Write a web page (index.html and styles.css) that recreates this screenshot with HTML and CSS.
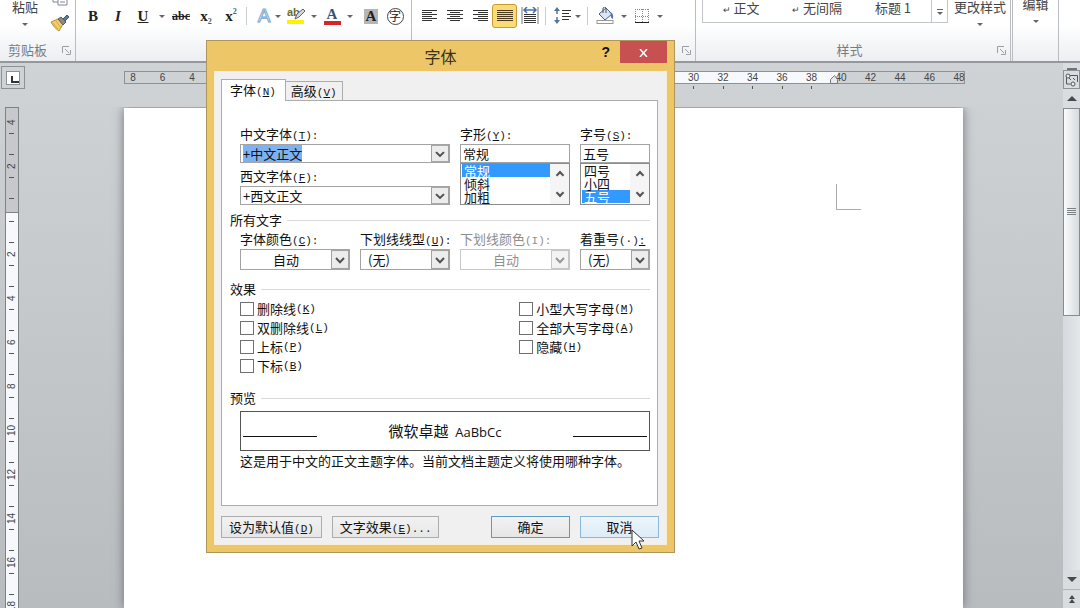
FILE: index.html
```html
<!DOCTYPE html>
<html lang="zh-CN">
<head>
    <meta charset="UTF-8">
    <title>字体</title>
    <link rel="stylesheet" href="styles.css">
</head>
<body>
    <!-- ribbon -->
    <header class="ribbon">
        <section class="group clipboard">
            <div class="group-main">
                <button class="big-button">粘贴<i class="caret"></i></button>
                <div class="clip-icons">
                    <button class="tool" aria-label="复制">
                        <svg width="18" height="6" viewBox="0 0 18 6"><path d="M2 0v2h5M7 0v5h9V0M9 2h5" fill="#fff" stroke="#7d8794"/></svg>
                    </button>
                    <button class="tool" aria-label="格式刷">
                        <svg width="20" height="18" viewBox="0 0 20 18"><path d="M1 8l7-3 5 5-4 7c-3-2-6-5-8-9z" fill="#f3cf6b" stroke="#b98d35"/><path d="M3 9l5 6M6 7l5 7" stroke="#d8a743"/><path d="M8 5l3-2 5 5-3 3z" fill="#8f8a86" stroke="#5f5b5a"/><path d="M13 5l4-4 2 2-4 4z" fill="#5b79a5" stroke="#41597c"/></svg>
                    </button>
                </div>
            </div>
            <div class="group-label">剪贴板<button class="launcher" aria-label="剪贴板选项"><svg width="9" height="9" viewBox="0 0 9 9"><path d="M.5 7V.5H7M3 3l4 4M8.500 4v4.500H4" fill="none" stroke="#9a9fa6"/></svg></button></div>
        </section>

        <section class="group font-group">
            <div class="tools spaced">
                <button class="tool bold">B</button>
                <button class="tool italic">I</button>
                <button class="tool underline">U</button>
                <button class="drop" aria-label="下划线"><i class="caret"></i></button>
                <button class="tool strike">abc</button>
                <button class="tool script">x<sub>2</sub></button>
                <button class="tool script">x<sup>2</sup></button>
            </div>
            <i class="sep"></i>
            <div class="tools">
                <button class="tool narrow effect">A</button>
                <button class="drop" aria-label="文本效果"><i class="caret"></i></button>
                <button class="tool marker" aria-label="突出显示">
                    <svg width="20" height="18" viewBox="0 0 20 18"><rect x="1" y="13" width="17" height="4" fill="#fff200"/><text x="1" y="9" class="marker-text">ab</text><path d="M9 12l2-5 6-5 2 2-6 6z" fill="#d4d7dc" stroke="#5b6370"/></svg>
                </button>
                <button class="drop" aria-label="突出显示颜色"><i class="caret"></i></button>
                <button class="tool color">A</button>
                <button class="drop" aria-label="字体颜色"><i class="caret"></i></button>
                <button class="tool shade"><span>A</span></button>
                <button class="tool circled"><span>字</span></button>
            </div>
        </section>

        <section class="group para-group">
            <div class="group-main">
                <div class="tools">
                    <button class="tool wide" aria-label="左对齐"><svg width="16" height="14" viewBox="0 0 16 14"><path d="M0 1.500h15M0 3.500h10M0 5.500h15M0 7.500h10M0 9.500h15M0 11.500h10" stroke="#333"/></svg></button>
                    <button class="tool wide" aria-label="居中"><svg width="16" height="14" viewBox="0 0 16 14"><path d="M0 1.500h16M3 3.500h10M0 5.500h16M3 7.500h10M0 9.500h16M3 11.500h10" stroke="#333"/></svg></button>
                    <button class="tool wide" aria-label="右对齐"><svg width="16" height="14" viewBox="0 0 16 14"><path d="M1 1.500h15M6 3.500h10M1 5.500h15M6 7.500h10M1 9.500h15M6 11.500h10" stroke="#333"/></svg></button>
                    <button class="tool wide active" aria-label="两端对齐"><svg width="16" height="14" viewBox="0 0 16 14"><path d="M0 1.500h16M0 3.500h16M0 5.500h16M0 7.500h16M0 9.500h16M0 11.500h16" stroke="#4a3a1c"/></svg></button>
                    <button class="tool wide" aria-label="分散对齐"><svg width="18" height="18" viewBox="0 0 18 18"><path d="M1 0v17M17 0v17" stroke="#777"/><path d="M3 3h12M6 0L3 3l3 3M12 0l3 3-3 3" fill="none" stroke="#4a6fae" stroke-width="1.500"/><path d="M3 7.500h12M3 9.500h12M3 11.500h12M3 13.500h12M3 15.500h12" stroke="#333"/></svg></button>
                </div>
                <i class="sep"></i>
                <div class="tools">
                    <button class="tool medium" aria-label="行距"><svg width="17" height="18" viewBox="0 0 17 18"><path d="M3 2v5M3 10v5" stroke="#56739f" stroke-width="1.500"/><path d="M0 4l3-4 3 4zM0 13l3 4 3-4z" fill="#56739f"/><path d="M8 3.500h9M8 6.500h7M8 9.500h9M8 12.500h7" stroke="#333"/></svg></button>
                    <button class="drop" aria-label="行距选项"><i class="caret"></i></button>
                </div>
                <i class="sep"></i>
                <div class="tools">
                    <button class="tool" aria-label="底纹"><svg width="20" height="18" viewBox="0 0 20 18"><path d="M3 7l7-6 6 6-7 6z" fill="#dbe5f3" stroke="#45608d"/><path d="M7 6V1q2-2 3 0v5" fill="none" stroke="#555"/><path d="M13 5q5 0 4 7q-3-1-2-5z" fill="#4b72b4"/><rect x="1" y="13.500" width="16" height="3" fill="#fff" stroke="#999"/></svg></button>
                    <button class="drop" aria-label="底纹颜色"><i class="caret"></i></button>
                    <button class="tool" aria-label="边框"><svg width="15" height="15" viewBox="0 0 15 15"><path d="M.5 0v13M7.500 0v13M13.500 0v13M0 .5h14M0 7.500h14" stroke="#888" stroke-dasharray="1 1"/><path d="M0 13.500h14" stroke="#222"/></svg></button>
                    <button class="drop" aria-label="边框选项"><i class="caret"></i></button>
                </div>
            </div>
            <div class="group-label"><button class="launcher" aria-label="段落选项"><svg width="9" height="9" viewBox="0 0 9 9"><path d="M.5 7V.5H7M3 3l4 4M8.500 4v4.500H4" fill="none" stroke="#9a9fa6"/></svg></button></div>
        </section>

        <section class="group style-group">
            <div class="group-main">
                <div class="gallery">
                    <button class="style-item"><small>↵</small> 正文</button>
                    <button class="style-item"><small>↵</small> 无间隔</button>
                    <button class="style-item">标题 1</button>
                    <button class="more" aria-label="其他样式"><i class="caret"></i></button>
                </div>
                <button class="big-button">更改样式<i class="caret"></i></button>
            </div>
            <div class="group-label"><span>样式</span><button class="launcher" aria-label="样式选项"><svg width="9" height="9" viewBox="0 0 9 9"><path d="M.5 7V.5H7M3 3l4 4M8.500 4v4.500H4" fill="none" stroke="#9a9fa6"/></svg></button></div>
        </section>

        <section class="group edit-group">
            <button class="big-button">编辑<i class="caret"></i></button>
        </section>
    </header>

    <!-- document area -->
    <main class="workspace">
        <aside class="left-bar">
            <button class="tab-stop" aria-label="制表符"><i></i></button>
            <div class="v-ruler">
                <span>4</span><span>2</span><span class="zero"></span><span>2</span><span>4</span><span>6</span><span>8</span><span>10</span><span>12</span><span>14</span><span>16</span><span>18</span>
            </div>
        </aside>

        <div class="canvas">
            <div class="h-ruler">
                <span>8</span><span>6</span><span>4</span><span>2</span><span></span><span>2</span><span>4</span><span>6</span><span>8</span><span>10</span><span>12</span><span>14</span><span>16</span><span>18</span><span>20</span><span>22</span><span>24</span><span>26</span><span>28</span><span class="tick">30</span><span class="tick">32</span><span class="tick">34</span><span class="tick">36</span><span class="tick">38</span><span>40</span><span>42</span><span>44</span><span>46</span><span>48</span>
                <svg class="indent" width="8" height="12" viewBox="0 0 8 12"><path d="M.5 11.500v-4l4-4 3 4v4z" fill="#e8eaec" stroke="#777"/></svg>
            </div>
            <article class="page">
                <div class="corner"></div>
            </article>
        </div>

        <aside class="scrollbar">
            <i class="split"></i>
            <button class="ruler-toggle" aria-label="标尺">
                <svg width="14" height="14" viewBox="0 0 14 14"><path d="M1.500 3v8h4M5 2.500h7.500V9M4 5l2 2M8 5l2 2" fill="none" stroke="#555"/><circle cx="3" cy="3" r="2" fill="#eee" stroke="#555"/><circle cx="8" cy="11" r="2" fill="#eee" stroke="#555"/></svg>
            </button>
            <button class="arrow" aria-label="向上"><svg width="10" height="5" viewBox="0 0 10 5"><path d="M0 5l5-5 5 5z" fill="#444b50"/></svg></button>
            <div class="track">
                <div class="thumb"><svg width="9" height="8" viewBox="0 0 9 8"><path d="M0 .5h9M0 2.500h9M0 4.500h9M0 6.500h9" stroke="#7b8287"/></svg></div>
            </div>
            <button class="arrow" aria-label="向下"><svg width="10" height="5" viewBox="0 0 10 5"><path d="M0 0l5 5 5-5z" fill="#444b50"/></svg></button>
            <button class="prev" aria-label="前一页"><svg width="8" height="8" viewBox="0 0 8 8"><path d="M1 4l3-4 3 4zM1 8l3-4 3 4z" fill="#444b50"/></svg></button>
        </aside>
    </main>

    <!-- font dialog -->
    <div class="dialog" role="dialog" aria-labelledby="dialog-title">
        <div class="title-bar">
            <h1 id="dialog-title">字体</h1>
            <div class="window-buttons">
                <button class="help">?</button>
                <button class="close" aria-label="关闭"><svg width="9" height="8" viewBox="0 0 9 8"><path d="M1 0l7 8M8 0L1 8" stroke="#fff" stroke-width="1.500"/></svg></button>
            </div>
        </div>
        <form class="dialog-body">
            <div class="tabs">
                <button type="button" class="tab current">字体<span class="key">(<u>N</u>)</span></button>
                <button type="button" class="tab">高级<span class="key">(<u>V</u>)</span></button>
            </div>
            <div class="panel">
                <div class="fields">
                    <div class="stack span2">
                        <label for="cn-font">中文字体<span class="key">(<u>T</u>):</span></label>
                        <div class="combo">
                            <input id="cn-font" type="text" value="+中文正文">
                            <button type="button" class="combo-arrow" aria-label="展开"></button>
                        </div>
                        <label class="second" for="west-font">西文字体<span class="key">(<u>F</u>):</span></label>
                        <select id="west-font"><option>+西文正文</option></select>
                    </div>
                    <div class="stack">
                        <label for="face">字形<span class="key">(<u>Y</u>):</span></label>
                        <input id="face" class="box" type="text" value="常规">
                        <div class="list">
                            <select size="3" aria-label="字形">
                                <option selected>常规</option>
                                <option>倾斜</option>
                                <option>加粗</option>
                            </select>
                            <div class="list-scroll"><i class="chev up"></i><i class="chev"></i></div>
                        </div>
                    </div>
                    <div class="stack">
                        <label for="size">字号<span class="key">(<u>S</u>):</span></label>
                        <input id="size" class="box" type="text" value="五号">
                        <div class="list">
                            <select size="3" aria-label="字号">
                                <option>四号</option>
                                <option>小四</option>
                                <option selected>五号</option>
                            </select>
                            <div class="list-scroll"><i class="chev up"></i><i class="chev"></i></div>
                        </div>
                    </div>
                </div>

                <h2>所有文字</h2>
                <div class="fields tall">
                    <div class="stack">
                        <label for="font-color">字体颜色<span class="key">(<u>C</u>):</span></label>
                        <select id="font-color" class="centered"><option>自动</option></select>
                    </div>
                    <div class="stack">
                        <label for="line-type">下划线线型<span class="key">(<u>U</u>):</span></label>
                        <select id="line-type"><option>(无)</option></select>
                    </div>
                    <div class="stack disabled">
                        <label for="line-color">下划线颜色<span class="key">(I):</span></label>
                        <select id="line-color" class="centered" disabled><option>自动</option></select>
                    </div>
                    <div class="stack">
                        <label for="emphasis">着重号<span class="key">(·)<u>:</u></span></label>
                        <select id="emphasis"><option>(无)</option></select>
                    </div>
                </div>

                <h2 class="effects-title">效果</h2>
                <div class="effects">
                    <div class="checks">
                        <label><input type="checkbox">删除线<span class="key">(<u>K</u>)</span></label>
                        <label><input type="checkbox">双删除线<span class="key">(<u>L</u>)</span></label>
                        <label><input type="checkbox">上标<span class="key">(<u>P</u>)</span></label>
                        <label><input type="checkbox">下标<span class="key">(<u>B</u>)</span></label>
                    </div>
                    <div class="checks">
                        <label><input type="checkbox">小型大写字母<span class="key">(<u>M</u>)</span></label>
                        <label><input type="checkbox">全部大写字母<span class="key">(<u>A</u>)</span></label>
                        <label><input type="checkbox">隐藏<span class="key">(<u>H</u>)</span></label>
                    </div>
                </div>

                <h2 class="preview-title">预览</h2>
                <div class="preview">
                    <i class="baseline"></i>
                    <span>微软卓越&nbsp; <span class="latin">AaBbCc</span></span>
                    <i class="baseline"></i>
                </div>
                <p class="hint">这是用于中文的正文主题字体。当前文档主题定义将使用哪种字体。</p>
            </div>
            <div class="actions">
                <button type="button">设为默认值<span class="key">(<u>D</u>)</span></button>
                <button type="button">文字效果<span class="key">(<u>E</u>)...</span></button>
                <button type="button" class="ok">确定</button>
                <button type="button" class="cancel">取消</button>
            </div>
        </form>
        <svg class="pointer" width="14" height="21" viewBox="0 0 14 21"><path d="M1 1v16l4-4 3 7 3-1-3-7h5z" fill="#fff" stroke="#333"/></svg>
    </div>

    <script>
        document.querySelector('#cn-font').select();
    </script>
</body>
</html>
```
FILE: styles.css
```css
* {
    box-sizing: border-box;
}

body {
    margin: 0;
    height: 100vh;
    display: flex;
    flex-direction: column;
    overflow: hidden;
    font-family: "Noto Sans CJK SC", sans-serif;
    font-size: 13px;
    line-height: 18px;
    color: #111;
}

button, input, select {
    font: inherit;
    color: inherit;
    margin: 0;
    padding: 0;
    border: 0;
    border-radius: 0;
    background: none;
    outline: none;
}

i {
    font-style: normal;
}

/* ribbon */
.ribbon {
    display: flex;
    flex: none;
    height: 63px;
    background: linear-gradient(#fff 40%, #eceef1);
    border-bottom: 2px solid #93989c;
    color: #444;
}

.group {
    display: flex;
    flex-direction: column;
    justify-content: space-between;
    border-right: 1px solid #b9bdc2;
}

.group-main, .tools {
    display: flex;
    align-items: center;
}

.clipboard {
    width: 76px;
}

.clipboard .group-main {
    padding-left: 12px;
    gap: 10px;
    align-items: flex-start;
}

.clip-icons .tool {
    display: flex;
    height: 6px;
}

.clip-icons .tool + .tool {
    height: 18px;
    margin-top: 8px;
}

.font-group {
    flex-direction: row;
    justify-content: flex-start;
    width: 336px;
    padding-left: 5px;
}

.para-group {
    width: 284px;
    padding-left: 5px;
}

.tools, .font-group .sep {
    height: 32px;
}

.spaced {
    gap: 1px;
}

.tool {
    width: 24px;
    height: 24px;
    display: flex;
    align-items: center;
    justify-content: center;
    font-family: "Liberation Serif", serif;
    font-size: 15px;
    color: #222;
}

.tool.narrow {
    width: 16px;
}

.tool.medium {
    width: 20px;
}

.tool.wide {
    width: 25px;
}

.tool.active {
    background: #fbdc74;
    border: 1px solid #c79a35;
    border-radius: 3px;
}

.tool svg {
    flex: none;
}

.bold {
    font-weight: bold;
}

.italic {
    font-style: italic;
    font-weight: bold;
}

.underline {
    font-weight: bold;
    text-decoration: underline;
}

.strike {
    font-size: 12px;
    font-weight: bold;
    text-decoration: line-through;
}

.script {
    font-weight: bold;
}

.script sub, .script sup {
    font-size: 8px;
    line-height: 8px;
    color: #3a5d94;
}

.script sub {
    align-self: flex-end;
    margin-bottom: 2px;
}

.script sup {
    align-self: flex-start;
    margin-top: 4px;
}

.effect {
    font-family: "Liberation Sans", sans-serif;
    font-size: 19px;
    color: #eaf4fd;
    -webkit-text-stroke: 1px #7ba9d6;
}

.marker-text {
    font: bold 11px "Liberation Sans", sans-serif;
    fill: #6b6a2c;
}

.color {
    height: 18px;
    font-weight: bold;
    color: #39507c;
    background: linear-gradient(#d8232a, #d8232a) center bottom / 17px 4px no-repeat;
    line-height: 14px;
    align-items: flex-start;
}

.shade {
    margin-left: 3px;
    font-weight: bold;
}

.shade span {
    width: 14px;
    line-height: 15px;
    background: #b5b5b5;
}

.circled span {
    width: 17px;
    height: 17px;
    border: 1px solid #444;
    border-radius: 50%;
    font-family: "Noto Sans CJK SC", sans-serif;
    font-size: 12px;
    line-height: 14px;
}

.drop {
    width: 12px;
    height: 24px;
    display: flex;
    align-items: center;
    justify-content: center;
}

.caret {
    display: block;
    border: 3px solid transparent;
    border-top-color: #666;
    border-bottom-width: 0;
}

.sep {
    flex: none;
    width: 1px;
    margin: 0 6px 0 3px;
    background: linear-gradient(#c9cdd2, #c9cdd2) center / 1px 18px no-repeat;
    height: 32px;
}

.font-group .sep {
    margin-right: 9px;
}

.big-button {
    display: flex;
    flex-direction: column;
    align-items: center;
    gap: 9px;
    line-height: 14px;
    white-space: nowrap;
}

.group-label {
    display: flex;
    align-items: center;
    justify-content: flex-end;
    height: 22px;
    padding-right: 4px;
    color: #777c84;
}

.clipboard .group-label {
    justify-content: space-between;
    padding-left: 8px;
}

.launcher {
    display: grid;
}

.style-group {
    flex: 0 0 317px;
    padding-left: 6px;
    border-right: 3px double #b9bdc2;
}

.style-group .group-main {
    gap: 6px;
    align-items: flex-start;
}

.gallery {
    display: flex;
    width: 246px;
    height: 23px;
    border: 1px solid #c3c7cc;
    border-top: 0;
    background: #fff;
}

.style-item {
    flex: 1;
    line-height: 16px;
    align-self: flex-start;
    white-space: nowrap;
}

.style-item small {
    font-size: 9px;
}

.more {
    display: flex;
    align-items: center;
    justify-content: center;
    width: 16px;
    padding-top: 4px;
    border-left: 1px solid #c3c7cc;
}

.more .caret {
    position: relative;
}

.more .caret::before {
    content: "";
    position: absolute;
    left: -3px;
    top: -6px;
    width: 6px;
    height: 1px;
    background: #666;
}

.style-group .group-label span {
    margin: auto;
}

.edit-group {
    flex: 0 0 46px;
}

.edit-group .big-button {
    margin-top: -3px;
}

/* document area */
.workspace {
    flex: 1;
    min-height: 0;
    display: flex;
    background: linear-gradient(#cfd3d6, #b8bcbf);
}

.left-bar {
    display: flex;
    flex-direction: column;
    gap: 18px;
    width: 25px;
    padding-top: 3px;
}

.tab-stop {
    flex: none;
    display: grid;
    place-items: center;
    width: 24px;
    height: 23px;
    margin-left: 1px;
    border: 1px solid #8c9195;
}

.tab-stop i {
    width: 14px;
    height: 14px;
    padding: 4px;
    background: #fff;
    border: 1px solid #8c9195;
}

.tab-stop i::before {
    content: "";
    display: block;
    width: 6px;
    height: 5px;
    border: solid #333;
    border-width: 0 0 2px 2px;
}

.v-ruler {
    flex: 1;
    width: 14px;
    margin-left: 5px;
    overflow: hidden;
    border: 1px solid #7d8287;
    border-bottom: 0;
    background: linear-gradient(#c6c8cc 104px, #7d8287 104px, #7d8287 105px, #f7f8fb 105px);
}

.v-ruler span {
    display: flex;
    align-items: center;
    justify-content: space-between;
    width: 12px;
    height: 44px;
    padding: 10px 0;
    writing-mode: vertical-rl;
    transform: rotate(180deg);
    font: 10px/12px "Liberation Sans", sans-serif;
    color: #444;
}

.v-ruler span:first-child {
    margin-top: -8px;
}

.v-ruler span::before, .v-ruler span::after {
    content: "";
    width: 5px;
    height: 1px;
    background: #555;
}

.v-ruler span:first-child::after {
    visibility: hidden;
}

.canvas {
    flex: 1;
    min-width: 0;
    display: flex;
    flex-direction: column;
    gap: 24px;
    padding: 8px 100px 0 99px;
}

.h-ruler {
    position: relative;
    flex: none;
    display: flex;
    justify-content: space-between;
    height: 13px;
    margin-right: -2px;
    border: 1px solid #8c9195;
    background: linear-gradient(90deg, transparent 15%, #f7f9fc 15%, #f7f9fc 85%, transparent 85%);
    font: 10px/11px "Liberation Sans", sans-serif;
    text-align: center;
    color: #444;
}

.h-ruler span {
    width: 16px;
}

.h-ruler span:last-of-type {
    margin-right: -3px;
}

.tick::after {
    content: "";
    display: block;
    width: 1px;
    height: 3px;
    margin: 3px auto 0;
    background: #555;
}

.indent {
    position: absolute;
    left: 84%;
    top: 0;
}

.page {
    flex: 1;
    background: #fff;
    box-shadow: 0 0 10px #6e7276;
    clip-path: inset(-1px -14px 0 -14px);
}

.corner {
    width: 25px;
    height: 26px;
    margin: 76px 102px 0 auto;
    border: solid #aaa;
    border-width: 0 0 1px 1px;
}

.scrollbar {
    display: flex;
    flex-direction: column;
    align-items: center;
    width: 17px;
    padding-top: 5px;
    background: #d9dde0;
}

.split {
    width: 10px;
    height: 2px;
    background: #6f767b;
}

.ruler-toggle {
    display: grid;
    place-items: center;
    width: 17px;
    height: 19px;
    border: 1px solid #8c9195;
}

.arrow {
    display: grid;
    place-items: center;
    width: 17px;
    height: 19px;
}

.track {
    flex: 1;
    width: 17px;
    background: linear-gradient(90deg, #d5dade, #e3e7ea);
}

.thumb {
    display: grid;
    place-items: center;
    height: 45%;
    border: 1px solid #868d92;
    background: linear-gradient(90deg, #fafbfc, #d6dadd);
}

.prev {
    display: grid;
    place-items: center;
    width: 17px;
    height: 19px;
    border-top: 1px solid #aeb4b8;
}

/* dialog */
.dialog {
    position: absolute;
    left: 206px;
    top: 40px;
    width: 469px;
    padding: 0 7px 7px;
    background: #edc668;
    border: 1px solid #ad955c;
}

.title-bar {
    display: grid;
    grid-template-columns: 1fr auto 1fr;
    height: 30px;
}

.title-bar h1 {
    grid-column: 2;
    margin: 0;
    font-size: 16px;
    font-weight: normal;
    line-height: 30px;
    color: #3c311a;
}

.window-buttons {
    display: flex;
    justify-content: flex-end;
    gap: 10px;
    height: 22px;
}

.help {
    font-family: "Liberation Sans", sans-serif;
    font-size: 14px;
    font-weight: bold;
}

.close {
    width: 47px;
    background: #c75050;
}

.dialog-body {
    padding: 7px 7px 6px 6px;
    background: #f0f0f0;
    border: 1px solid #f7eed9;
}

.key {
    font-family: "Liberation Mono", monospace;
    font-size: 11px;
}

.tabs {
    display: flex;
    align-items: flex-end;
}

.tab {
    height: 19px;
    padding: 0 5px;
    line-height: 17px;
    border: 1px solid #acacac;
    border-width: 1px 1px 0 0;
}

.tab.current {
    position: relative;
    height: 22px;
    padding: 0 9px 0 8px;
    line-height: 20px;
    border-left-width: 1px;
    margin-bottom: -1px;
    background: #fff;
}

.panel {
    height: 406px;
    margin-right: 1px;
    padding: 24px 7px 0 18px;
    background: #fff;
    border: 1px solid #acacac;
}

.fields {
    display: grid;
    grid-template-columns: 11fr 9fr 11fr 7fr;
    column-gap: 10px;
}

.stack {
    display: flex;
    flex-direction: column;
    min-width: 0;
}

.span2 {
    grid-column: span 2;
}

.stack label {
    height: 19px;
    white-space: nowrap;
}

.stack label.second {
    margin-top: 4px;
}

.stack > select, .combo, .box {
    width: 100%;
    height: 19px;
    padding: 0 2px;
    line-height: 17px;
    border: 1px solid #a3a3a3;
    background-color: #fff;
}

.stack > select {
    appearance: none;
    opacity: 1;
}

.stack > select, .combo-arrow {
    background-image: url("data:image/svg+xml,%3Csvg xmlns='http://www.w3.org/2000/svg' width='18' height='18' viewBox='0 0 18 18' preserveAspectRatio='none'%3E%3Crect x='.5' y='.5' width='17' height='17' fill='%23ececec' stroke='%23a3a3a3'/%3E%3Cpath d='M5 7.500l4 4 4-4' fill='none' stroke='%23505050' stroke-width='2'/%3E%3C/svg%3E");
    background-repeat: no-repeat;
    background-position: right center;
    background-size: 18px 100%;
}

.tall .stack > select {
    height: 21px;
    padding-left: 7px;
}

.tall .stack > .centered {
    padding-left: 32px;
}

.combo {
    display: flex;
}

.combo input {
    flex: 1;
    min-width: 0;
}

.combo-arrow {
    width: 18px;
    margin-right: -2px;
}

.combo input::selection {
    background: #7db2f2;
    color: #111;
}

.list {
    display: flex;
    height: 42px;
    border: 1px solid #8c8c8c;
    padding: 0 0 0 1px;
}

.list select {
    flex: 1;
    min-width: 0;
    height: 40px;
    overflow: hidden;
    background: #fff;
}

.list option {
    display: flex;
    align-items: center;
    height: 13px;
    min-height: 0;
    padding: 0 2px;
    line-height: 13px;
}

.list option:checked {
    color: #fff;
    background: #3399ff linear-gradient(#3399ff, #3399ff);
}

.list-scroll {
    display: flex;
    flex-direction: column;
    align-items: center;
    justify-content: space-between;
    width: 19px;
    padding: 8px 0;
    background: #f5f5f5;
}

.chev {
    width: 6px;
    height: 6px;
    border: solid #555;
    border-width: 0 2px 2px 0;
    transform: rotate(45deg);
}

.chev.up {
    transform: rotate(225deg);
}

.disabled {
    color: #8d8d8d;
}

.stack.disabled > select {
    opacity: 0.6;
    color: #444;
}

.panel h2 {
    display: flex;
    align-items: center;
    gap: 5px;
    height: 18px;
    margin: 6px 0 1px -10px;
    font-size: 13px;
    font-weight: normal;
}

.panel h2::after {
    content: "";
    flex: 1;
    height: 1px;
    background: #d9d9d9;
}

.panel .effects-title {
    margin-top: 10px;
}

.effects {
    display: flex;
    justify-content: space-between;
    padding-right: 16px;
}

.checks label {
    display: flex;
    align-items: center;
    height: 19px;
    white-space: nowrap;
}

.checks input {
    appearance: none;
    width: 14px;
    height: 14px;
    margin-right: 3px;
    border: 1px solid #707070;
    background: #fff;
}

.panel .preview-title {
    margin: 14px 0 4px -10px;
}

.preview {
    display: flex;
    align-items: center;
    justify-content: space-between;
    height: 40px;
    padding: 0 2px;
    border: 1px solid #555;
    font-size: 15px;
}

.baseline {
    width: 74px;
    margin-top: 11px;
    border-top: 1px solid #111;
}

.latin {
    font-family: "Open Sans", sans-serif;
    font-size: 13px;
}

.hint {
    margin: 1px 0 0;
    white-space: nowrap;
}

.actions {
    display: flex;
    gap: 10px;
    padding-top: 10px;
}

.actions button {
    height: 22px;
    padding: 0 7px;
    line-height: 20px;
    border: 1px solid #acacac;
    background: linear-gradient(#f2f2f2, #e6e6e6);
}

.actions .ok, .actions .cancel {
    width: 79px;
    border-color: #5a9cc4;
}

.actions .ok {
    margin-left: auto;
}

.actions .cancel {
    border-color: #8ab8d8;
    background: linear-gradient(#edf5fb, #dcecf8);
}

/* mouse pointer over the cancel button */
.pointer {
    position: absolute;
    left: 424px;
    top: 488px;
}
```
